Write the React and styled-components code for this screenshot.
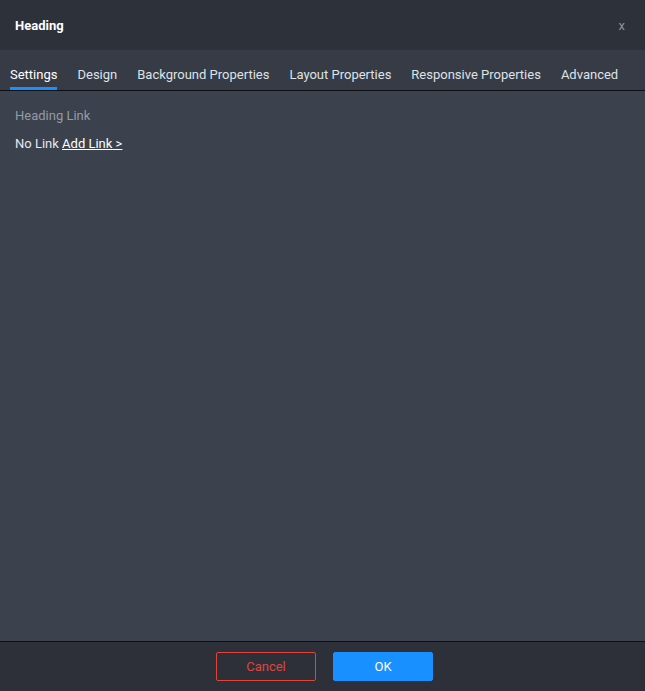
import styled, { createGlobalStyle } from 'styled-components';

const GlobalStyle = createGlobalStyle`
  html, body {
    margin: 0;
    padding: 0;
    height: 100%;
    background: #3b414d;
  }
  #root {
    height: 100%;
  }
  * {
    box-sizing: border-box;
  }
`;

const Dialog = styled.div`
  display: flex;
  flex-direction: column;
  width: 645px;
  height: 691px;
  font-family: Roboto, "Liberation Sans", sans-serif;
  background: #3b414d;
`;

const Header = styled.div`
  display: flex;
  align-items: center;
  justify-content: space-between;
  height: 50px;
  padding: 0 20px 0 15px;
  background: #2d313a;
`;

const Title = styled.div`
  color: #ffffff;
  font-size: 13px;
  font-weight: 700;
`;

const Close = styled.div`
  color: #8d929c;
  font-size: 13px;
  cursor: pointer;
`;

const TabBar = styled.div`
  display: flex;
  gap: 20px;
  height: 41px;
  padding: 0 10px;
  background: #363b46;
  border-bottom: 1px solid #0d0f12;
`;

const Tab = styled.div`
  display: flex;
  align-items: center;
  padding-top: 11px;
  font-size: 13px;
  color: ${p => (p.$active ? '#ffffff' : '#dfe2e7')};
  border-bottom: 3px solid ${p => (p.$active ? '#1890ff' : 'transparent')};
  cursor: pointer;
`;

const Body = styled.div`
  flex: 1;
  padding: 17px 15px;
  background: #3b414d;
`;

const Label = styled.div`
  color: #959ba6;
  font-size: 13px;
  line-height: 15px;
  margin-bottom: 13px;
`;

const LinkRow = styled.div`
  color: #e6e8ec;
  font-size: 13px;
  line-height: 15px;
`;

const AddLink = styled.a`
  color: #ffffff;
  text-decoration: underline;
  cursor: pointer;
`;

const Footer = styled.div`
  display: flex;
  justify-content: center;
  align-items: center;
  gap: 17px;
  height: 50px;
  padding-left: 4px;
  background: #2d3039;
  border-top: 1px solid #0d0f12;
`;

const Button = styled.button`
  width: 100px;
  height: 29px;
  border-radius: 2px;
  font-family: Roboto, "Liberation Sans", sans-serif;
  font-size: 13px;
  cursor: pointer;
  border: 1px solid ${p => (p.$primary ? '#1890ff' : '#e0443a')};
  background: ${p => (p.$primary ? '#1890ff' : 'transparent')};
  color: ${p => (p.$primary ? '#ffffff' : '#e0443a')};
`;

const tabs = [
  'Settings',
  'Design',
  'Background Properties',
  'Layout Properties',
  'Responsive Properties',
  'Advanced',
];

export default function App() {
  return (
    <>
      <GlobalStyle />
      <Dialog>
        <Header>
          <Title>Heading</Title>
          <Close>x</Close>
        </Header>
        <TabBar>
          {tabs.map((t, i) => (
            <Tab key={t} $active={i === 0}>{t}</Tab>
          ))}
        </TabBar>
        <Body>
          <Label>Heading Link</Label>
          <LinkRow>
            No Link <AddLink>Add Link &gt;</AddLink>
          </LinkRow>
        </Body>
        <Footer>
          <Button>Cancel</Button>
          <Button $primary>OK</Button>
        </Footer>
      </Dialog>
    </>
  );
}
